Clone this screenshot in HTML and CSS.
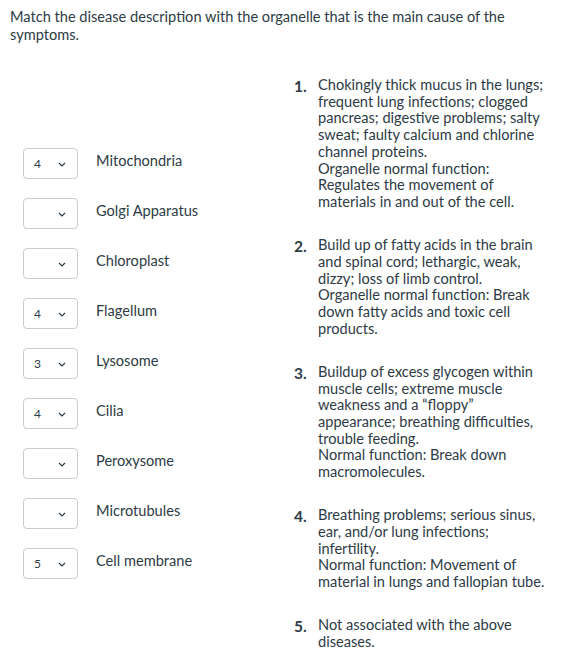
FILE: index.html
```html
<!DOCTYPE html>
<html lang="en">

<head>
    <meta charset="UTF-8">
    <meta name="viewport" content="width=device-width, initial-scale=1.0">
    <title>Matching question</title>
    <link rel="stylesheet" href="styles.css">
</head>

<body>
    <p class="prompt">Match the disease description with the organelle that is the main cause of the symptoms.</p>

    <section class="match">

        <div class="choices">
            <div class="choice">
                <div class="pick"><span>4</span><svg viewBox="0 0 8 5"><path d="M1 1l3 3 3-3"/></svg></div>
                <span class="label">Mitochondria</span>
            </div>
            <div class="choice">
                <div class="pick"><span></span><svg viewBox="0 0 8 5"><path d="M1 1l3 3 3-3"/></svg></div>
                <span class="label">Golgi Apparatus</span>
            </div>
            <div class="choice">
                <div class="pick"><span></span><svg viewBox="0 0 8 5"><path d="M1 1l3 3 3-3"/></svg></div>
                <span class="label">Chloroplast</span>
            </div>
            <div class="choice">
                <div class="pick"><span>4</span><svg viewBox="0 0 8 5"><path d="M1 1l3 3 3-3"/></svg></div>
                <span class="label">Flagellum</span>
            </div>
            <div class="choice">
                <div class="pick"><span>3</span><svg viewBox="0 0 8 5"><path d="M1 1l3 3 3-3"/></svg></div>
                <span class="label">Lysosome</span>
            </div>
            <div class="choice">
                <div class="pick"><span>4</span><svg viewBox="0 0 8 5"><path d="M1 1l3 3 3-3"/></svg></div>
                <span class="label">Cilia</span>
            </div>
            <div class="choice">
                <div class="pick"><span></span><svg viewBox="0 0 8 5"><path d="M1 1l3 3 3-3"/></svg></div>
                <span class="label">Peroxysome</span>
            </div>
            <div class="choice">
                <div class="pick"><span></span><svg viewBox="0 0 8 5"><path d="M1 1l3 3 3-3"/></svg></div>
                <span class="label">Microtubules</span>
            </div>
            <div class="choice">
                <div class="pick"><span>5</span><svg viewBox="0 0 8 5"><path d="M1 1l3 3 3-3"/></svg></div>
                <span class="label">Cell membrane</span>
            </div>
        </div>

        <ol class="answers">
            <li>
                <span class="num">1.</span>
                <div class="desc">Chokingly thick mucus in the lungs; frequent lung infections; clogged pancreas; digestive problems; salty sweat; faulty calcium and chlorine channel proteins.<br>Organelle normal function: Regulates the movement of materials in and out of the cell.</div>
            </li>
            <li>
                <span class="num">2.</span>
                <div class="desc">Build up of fatty acids in the brain and spinal cord; lethargic, weak, dizzy; loss of limb control.<br>Organelle normal function: Break down fatty acids and toxic cell products.</div>
            </li>
            <li>
                <span class="num">3.</span>
                <div class="desc">Buildup of excess glycogen within muscle cells; extreme muscle weakness and a &ldquo;floppy&rdquo; appearance; breathing difficulties, trouble feeding.<br>Normal function: Break down macromolecules.</div>
            </li>
            <li>
                <span class="num">4.</span>
                <div class="desc">Breathing problems; serious sinus, ear, and/or lung infections; infertility.<br>Normal function: Movement of material in lungs and fallopian tube.</div>
            </li>
            <li>
                <span class="num">5.</span>
                <div class="desc">Not associated with the above diseases.</div>
            </li>
        </ol>

    </section>
</body>

</html>
```

FILE: styles.css
```css
* {
    box-sizing: border-box;
}

body {
    margin: 0;
    background: #fff;
    color: #2d3b45;
    font-family: 'Lato', 'Open Sans', sans-serif;
    font-size: 14.6px;
    line-height: 16.7px;
}

.prompt {
    margin: 0;
    padding: 8px 10px 0;
    width: 540px;
    line-height: 18px;
}

.match {
    display: flex;
    margin-top: 33px;
}

/* left side: dropdown + organelle */
.choices {
    width: 294px;
    padding: 71px 0 0 23px;
}

.choice {
    display: flex;
    align-items: flex-start;
    height: 50px;
}

.pick {
    width: 55px;
    height: 31px;
    border: 1px solid #c7cdd1;
    border-radius: 4px;
    display: flex;
    align-items: center;
    padding: 2px 0 0 10px;
    font-size: 12px;
}

.pick span {
    width: 24px;
}

.pick svg {
    width: 8px;
    height: 5px;
    fill: none;
    stroke: #2d3b45;
    stroke-width: 1.2;
}

.label {
    margin-left: 18px;
    padding-top: 5px;
}

/* right side: numbered descriptions */
.answers {
    list-style: none;
    margin: 0;
    padding: 0;
    width: 256px;
}

.answers li {
    display: flex;
    margin-bottom: 26.5px;
}

.num {
    width: 24px;
    flex-shrink: 0;
    font-weight: 700;
    font-size: 15.5px;
    padding-top: 1px;
}

.desc {
    flex: 1;
}
```
